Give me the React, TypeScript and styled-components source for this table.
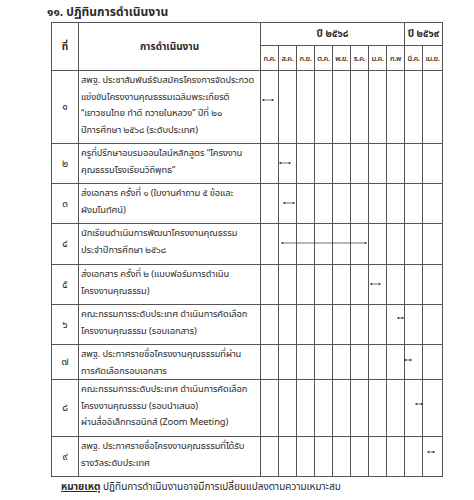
import React from "react";
import styled, { createGlobalStyle } from "styled-components";

const Global = createGlobalStyle`
  html, body { margin: 0; padding: 0; background: #fff; }
  body { font-family: "Noto Sans Thai", "Noto Sans", "Liberation Sans", sans-serif; color: #2b2b2b; }
`;

const Page = styled.div`
  width: 474px;
  height: 500px;
  padding: 4px 0 0 47px;
  box-sizing: border-box;
  overflow: hidden;
`;

const Title = styled.div`
  font-size: 12px;
  font-weight: 700;
  line-height: 16px;
  height: 18px;
`;

const Table = styled.table`
  border-collapse: collapse;
  margin-left: 4px;
  table-layout: fixed;
  width: 392px;
  border: 1.5px solid #555;
`;

const Col = styled.col<{ $w: number }>`
  width: ${(p) => p.$w}px;
`;

const HeadCell = styled.th<{ $h?: number }>`
  border: 1px solid #555;
  font-size: 10px;
  font-weight: 700;
  text-align: center;
  vertical-align: middle;
  padding: 0;
  height: ${(p) => (p.$h ? `${p.$h}px` : "auto")};
  white-space: nowrap;
`;

const MonthCell = styled.th`
  border: 1px solid #555;
  font-size: 7.5px;
  font-weight: 500;
  text-align: center;
  padding: 0;
  height: 24px;
  white-space: nowrap;
  letter-spacing: -0.3px;
  color: #222;
`;

const NumCell = styled.td`
  border: 1px solid #555;
  text-align: center;
  vertical-align: middle;
  font-size: 10px;
  padding: 0;
`;

const TextCell = styled.td`
  border: 1px solid #555;
  vertical-align: top;
  font-size: 9.4px;
  letter-spacing: -0.1px;
  line-height: 16.5px;
  padding: 1px 0 0 2px;
  white-space: nowrap;
  overflow: hidden;
`;

const Line = styled.div``;

const GridCell = styled.td<{ $anchor?: boolean }>`
  border: 1px solid #555;
  padding: 0;
  position: ${(p) => (p.$anchor ? "relative" : "static")};
`;

const ArrowBox = styled.svg`
  position: absolute;
  overflow: visible;
  height: 4px;
  pointer-events: none;
`;

const Note = styled.div`
  margin: 3px 0 0 14px;
  font-size: 10px;
  line-height: 14px;
`;

const NoteLabel = styled.span`
  font-weight: 700;
  text-decoration: underline;
`;

type Row = {
  n: string;
  lines: string[];
  h: number;
  a: [number, number];
  ay: number;
};

const rows: Row[] = [
  {
    n: "๑",
    lines: [
      "สพฐ. ประชาสัมพันธ์รับสมัครโครงการจัดประกวด",
      "แข่งขันโครงงานคุณธรรมเฉลิมพระเกียรติ",
      "“เยาวชนไทย ทำดี ถวายในหลวง” ปีที่ ๒๐",
      "ปีการศึกษา ๒๕๖๘ (ระดับประเทศ)",
    ],
    h: 73,
    a: [1, 13],
    ay: 29,
  },
  {
    n: "๒",
    lines: ["ครูที่ปรึกษาอบรมออนไลน์หลักสูตร “โครงงาน", "คุณธรรมโรงเรียนวิถีพุทธ”"],
    h: 40,
    a: [18, 30],
    ay: 19,
  },
  {
    n: "๓",
    lines: ["ส่งเอกสาร ครั้งที่ ๑ (ใบงานคำถาม ๕ ข้อและ", "ผังมโนทัศน์)"],
    h: 40,
    a: [22, 34],
    ay: 19,
  },
  {
    n: "๔",
    lines: ["นักเรียนดำเนินการพัฒนาโครงงานคุณธรรม", "ประจำปีการศึกษา ๒๕๖๘"],
    h: 41,
    a: [20, 106],
    ay: 19,
  },
  {
    n: "๕",
    lines: ["ส่งเอกสาร ครั้งที่ ๒ (แบบฟอร์มการดำเนิน", "โครงงานคุณธรรม)"],
    h: 40,
    a: [109, 120],
    ay: 19,
  },
  {
    n: "๖",
    lines: ["คณะกรรมการระดับประเทศ ดำเนินการคัดเลือก", "โครงงานคุณธรรม (รอบเอกสาร)"],
    h: 40,
    a: [136, 143],
    ay: 13,
  },
  {
    n: "๗",
    lines: ["สพฐ. ประกาศรายชื่อโครงงานคุณธรรมที่ผ่าน", "การคัดเลือกรอบเอกสาร"],
    h: 32,
    a: [143, 151],
    ay: 15,
  },
  {
    n: "๘",
    lines: [
      "คณะกรรมการระดับประเทศ ดำเนินการคัดเลือก",
      "โครงงานคุณธรรม (รอบนำเสนอ)",
      "ผ่านสื่ออิเล็กทรอนิกส์ (Zoom Meeting)",
    ],
    h: 57,
    a: [154, 162],
    ay: 24,
  },
  {
    n: "๙",
    lines: ["สพฐ. ประกาศรายชื่อโครงงานคุณธรรมที่ได้รับ", "รางวัลระดับประเทศ"],
    h: 40,
    a: [166, 174],
    ay: 15,
  },
];

const months = ["ก.ค.", "ส.ค.", "ก.ย.", "ต.ค.", "พ.ย.", "ธ.ค.", "ม.ค.", "ก.พ", "มี.ค.", "เม.ย."];
const monthWidths = [18, 18, 18, 18, 18, 18, 18, 18, 18, 20];

function Arrow({ from, to, y }: { from: number; to: number; y: number }) {
  const w = to - from;
  return (
    <ArrowBox
      width={w}
      viewBox={`0 0 ${w} 4`}
      style={{ left: from, top: y - 2, width: w }}
    >
      <line x1={0.5} y1={2} x2={w - 0.5} y2={2} stroke="#333" strokeWidth={0.7} />
      <path d={`M0 2 L2.2 0.8 L2.2 3.2 Z`} fill="#333" />
      <path d={`M${w} 2 L${w - 2.2} 0.8 L${w - 2.2} 3.2 Z`} fill="#333" />
    </ArrowBox>
  );
}

export default function App() {
  return (
    <Page>
      <Global />
      <Title>๑๑. ปฏิทินการดำเนินงาน</Title>
      <Table>
        <colgroup>
          <Col $w={27} />
          <Col $w={182} />
          {monthWidths.map((w, i) => (
            <Col key={i} $w={w} />
          ))}
        </colgroup>
        <thead>
          <tr>
            <HeadCell rowSpan={2}>ที่</HeadCell>
            <HeadCell rowSpan={2}>การดำเนินงาน</HeadCell>
            <HeadCell colSpan={8} $h={22}>ปี ๒๕๖๘</HeadCell>
            <HeadCell colSpan={2} $h={22}>ปี ๒๕๖๙</HeadCell>
          </tr>
          <tr>
            {months.map((m) => (
              <MonthCell key={m}>{m}</MonthCell>
            ))}
          </tr>
        </thead>
        <tbody>
          {rows.map((r) => (
            <tr key={r.n} style={{ height: r.h }}>
              <NumCell>{r.n}</NumCell>
              <TextCell>
                {r.lines.map((l) => (
                  <Line key={l}>{l}</Line>
                ))}
              </TextCell>
              {months.map((m, i) => (
                <GridCell key={m} $anchor={i === 0}>
                  {i === 0 && <Arrow from={r.a[0]} to={r.a[1]} y={r.ay} />}
                </GridCell>
              ))}
            </tr>
          ))}
        </tbody>
      </Table>
      <Note>
        <NoteLabel>หมายเหตุ</NoteLabel> ปฏิทินการดำเนินงานอาจมีการเปลี่ยนแปลงตามความเหมาะสม
      </Note>
    </Page>
  );
}
